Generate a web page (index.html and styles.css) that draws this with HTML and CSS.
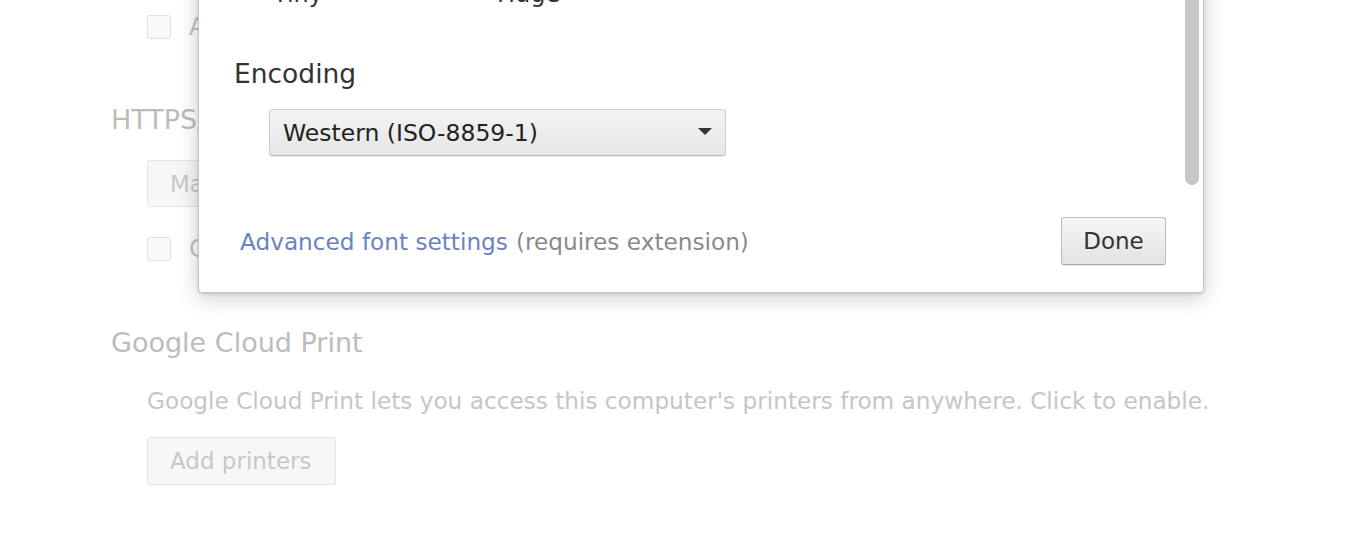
FILE: index.html
```html
<!DOCTYPE html>
<html>
<head>
<meta charset="utf-8">
<link rel="stylesheet" href="styles.css">
</head>
<body>
<div class="page">
  <div class="check-row">
    <span class="checkbox"></span>
    <span class="check-label">Ask where to save each file before downloading</span>
  </div>
  <h3 class="section-title first">HTTPS/SSL</h3>
  <div class="section-body">
    <div class="bg-button">Manage certificates...</div>
    <div class="check-row second">
      <span class="checkbox"></span>
      <span class="check-label">Check for server certificate revocation</span>
    </div>
  </div>
  <h3 class="section-title">Google Cloud Print</h3>
  <div class="section-body">
    <p class="desc">Google Cloud Print lets you access this computer's printers from anywhere. Click to enable.</p>
    <div class="bg-button printers">Add printers</div>
  </div>
</div>

<div class="dialog">
  <div class="dialog-content">
    <div class="size-row">
      <span class="size-min">Tiny</span>
      <span class="size-max">Huge</span>
    </div>
    <h4 class="dlg-heading">Encoding</h4>
    <div class="select">
      <span class="select-text">Western (ISO-8859-1)</span>
      <span class="select-arrow"></span>
    </div>
  </div>
  <div class="scroll-thumb"></div>
  <div class="dialog-footer">
    <div class="footer-text"><span class="link">Advanced font settings</span><span class="hint">(requires extension)</span></div>
    <div class="done">Done</div>
  </div>
</div>
</body>
</html>
```

FILE: styles.css
```css
html, body {
  margin: 0;
  padding: 0;
  background: #ffffff;
  width: 1350px;
  height: 558px;
  overflow: hidden;
  font-family: "DejaVu Sans", "Liberation Sans", sans-serif;
  position: relative;
}

.page {
  padding: 12px 0 0 111px;
}

.check-row {
  display: flex;
  align-items: center;
  height: 30px;
  margin-left: 36px;
  gap: 18px;
}

.check-row.second {
  margin-left: 0;
  margin-top: 27px;
}

.checkbox {
  width: 22px;
  height: 22px;
  border: 1px solid #e0e0e0;
  border-radius: 3px;
  background: #f9f9f9;
  flex: none;
}

.check-label {
  font-size: 24px;
  color: #c0c0c0;
  white-space: nowrap;
}

.section-title {
  margin: 23px 0 0 0;
  font-weight: normal;
  font-size: 27px;
  line-height: 34px;
  color: #bcbcbc;
}

.section-title.first {
  margin-top: 61px;
}

.section-body {
  margin-left: 36px;
}

.bg-button {
  display: inline-flex;
  align-items: center;
  box-sizing: border-box;
  height: 47px;
  margin-top: 23px;
  padding: 0 22px;
  border: 1px solid #e4e4e4;
  border-radius: 3px;
  background: #f7f7f7;
  font-size: 23px;
  color: #c8c8c8;
}

.section-title + .section-body + .section-title {
  margin-top: 62px;
}

.desc {
  margin: 26px 0 0 0;
  font-size: 23.2px;
  line-height: 30px;
  color: #c6c6c6;
  white-space: nowrap;
}

.bg-button.printers {
  margin-top: 21px;
  height: 48px;
  width: 189px;
}

/* Dialog overlay */
.dialog {
  position: absolute;
  left: 198px;
  top: -40px;
  width: 1006px;
  box-sizing: border-box;
  background: #ffffff;
  border: 1px solid #c4c4c4;
  border-radius: 0 0 4px 4px;
  box-shadow: 0 5px 22px rgba(0, 0, 0, 0.2), 0 1px 3px rgba(0, 0, 0, 0.15);
}

.dialog-content {
  height: 231px;
  box-sizing: border-box;
  padding: 18px 0 0 35px;
}

.size-row {
  display: flex;
  font-size: 24px;
  line-height: 30px;
  color: #333;
  padding-left: 39px;
}

.size-min {
  width: 224px;
}

.dlg-heading {
  margin: 49px 0 0 0;
  font-weight: normal;
  font-size: 26.5px;
  line-height: 32px;
  color: #333;
}

.select {
  margin: 19px 0 0 35px;
  width: 457px;
  height: 47px;
  box-sizing: border-box;
  display: flex;
  align-items: center;
  justify-content: space-between;
  padding: 0 13px 0 13px;
  border: 1px solid #cfcfcf;
  border-bottom-color: #bdbdbd;
  border-radius: 3px;
  background: linear-gradient(#f3f3f3, #e6e6e6);
  box-shadow: 0 1px 1px rgba(0, 0, 0, 0.08);
}

.select-text {
  font-size: 23.5px;
  color: #222;
}

.select-arrow {
  width: 0;
  height: 0;
  border-left: 7.5px solid transparent;
  border-right: 7.5px solid transparent;
  border-top: 7px solid #333;
  margin-bottom: 2px;
}

.scroll-thumb {
  position: absolute;
  right: 4px;
  top: 0;
  width: 14px;
  height: 224px;
  border-radius: 0 0 7px 7px;
  background: #c8c8c8;
}

.dialog-footer {
  display: flex;
  align-items: center;
  justify-content: space-between;
  padding: 25px 37px 27px 41px;
}

.footer-text {
  display: flex;
  gap: 8px;
  font-size: 23.2px;
  white-space: nowrap;
}

.link {
  color: #6a84c1;
}

.hint {
  color: #8a8a8a;
}

.done {
  width: 105px;
  height: 48px;
  box-sizing: border-box;
  display: flex;
  align-items: center;
  justify-content: center;
  border: 1px solid #bcbcbc;
  border-bottom-color: #a9a9a9;
  border-radius: 3px;
  background: linear-gradient(#f6f6f6, #e3e3e3);
  box-shadow: 0 1px 1px rgba(0, 0, 0, 0.1);
  font-size: 23px;
  color: #333;
}
```
